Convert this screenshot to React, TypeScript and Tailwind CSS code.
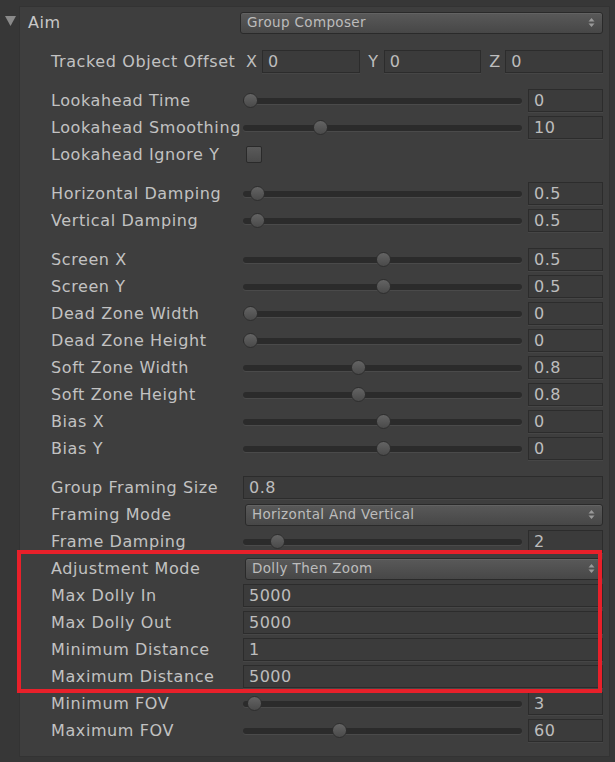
import React from "react";

type Row =
  | { kind: "vector"; label: string }
  | { kind: "slider"; label: string; pos: number; value: string }
  | { kind: "check"; label: string }
  | { kind: "field"; label: string; value: string }
  | { kind: "select"; label: string; value: string }
  | { kind: "gap" };

// pos = thumb position 0..1 along the track
const rows: Row[] = [
  { kind: "gap" },
  { kind: "vector", label: "Tracked Object Offset" },
  { kind: "gap" },
  { kind: "slider", label: "Lookahead Time", pos: 0, value: "0" },
  { kind: "slider", label: "Lookahead Smoothing", pos: 0.263, value: "10" },
  { kind: "check", label: "Lookahead Ignore Y" },
  { kind: "gap" },
  { kind: "slider", label: "Horizontal Damping", pos: 0.028, value: "0.5" },
  { kind: "slider", label: "Vertical Damping", pos: 0.028, value: "0.5" },
  { kind: "gap" },
  { kind: "slider", label: "Screen X", pos: 0.5, value: "0.5" },
  { kind: "slider", label: "Screen Y", pos: 0.5, value: "0.5" },
  { kind: "slider", label: "Dead Zone Width", pos: 0, value: "0" },
  { kind: "slider", label: "Dead Zone Height", pos: 0, value: "0" },
  { kind: "slider", label: "Soft Zone Width", pos: 0.406, value: "0.8" },
  { kind: "slider", label: "Soft Zone Height", pos: 0.406, value: "0.8" },
  { kind: "slider", label: "Bias X", pos: 0.5, value: "0" },
  { kind: "slider", label: "Bias Y", pos: 0.5, value: "0" },
  { kind: "gap" },
  { kind: "field", label: "Group Framing Size", value: "0.8" },
  { kind: "select", label: "Framing Mode", value: "Horizontal And Vertical" },
  { kind: "slider", label: "Frame Damping", pos: 0.103, value: "2" },
];

const boxed: Row[] = [
  { kind: "select", label: "Adjustment Mode", value: "Dolly Then Zoom" },
  { kind: "field", label: "Max Dolly In", value: "5000" },
  { kind: "field", label: "Max Dolly Out", value: "5000" },
  { kind: "field", label: "Minimum Distance", value: "1" },
  { kind: "field", label: "Maximum Distance", value: "5000" },
];

const tail: Row[] = [
  { kind: "slider", label: "Minimum FOV", pos: 0.015, value: "3" },
  { kind: "slider", label: "Maximum FOV", pos: 0.335, value: "60" },
];

const font = { fontFamily: '"DejaVu Sans", Verdana, sans-serif' };

function NumBox({ value, className = "" }: { value: string; className?: string }) {
  return (
    <div
      className={`h-[23px] bg-[#3b3b3b] border border-[#2c2c2c] shadow-[0_1px_0_#464646] flex items-center pl-[5px] text-[16px] tracking-[0.5px] text-[#bdbdbd] ${className}`}
    >
      {value}
    </div>
  );
}

function Dropdown({ value, className = "" }: { value: string; className?: string }) {
  return (
    <div
      className={`h-[22px] rounded-[3px] border border-[#2a2a2a] bg-gradient-to-b from-[#595959] to-[#474747] shadow-[inset_0_1px_0_#636363] flex items-center justify-between pl-[6px] pr-[7px] text-[13.5px] tracking-[0.35px] text-[#bcbcbc] ${className}`}
    >
      <span>{value}</span>
      <svg width="7" height="11" viewBox="0 0 7 11">
        <path d="M3.5 1 L6.5 4.5 H0.5 Z" fill="#9a9a9a" />
        <path d="M3.5 10 L6.5 6.5 H0.5 Z" fill="#9a9a9a" />
      </svg>
    </div>
  );
}

function Slider({ pos, value }: { pos: number; value: string }) {
  return (
    <div className="flex items-center flex-1">
      <div className="relative flex-1 h-[23px] flex items-center mr-[6px]">
        <div className="w-full h-[6px] rounded-full bg-[#2b2b2b] shadow-[0_1px_0_#4a4a4a]" />
        <div
          className="absolute top-[4px] w-[15px] h-[15px] rounded-full border border-[#2e2e2e] bg-gradient-to-b from-[#646464] to-[#4a4a4a]"
          style={{ left: `${pos * 266}px` }}
        />
      </div>
      <NumBox value={value} className="w-[75px]" />
    </div>
  );
}

function Control({ row }: { row: Row }) {
  switch (row.kind) {
    case "vector":
      return (
        <div className="flex items-center flex-1 gap-[7px] pl-[2px] text-[16px] text-[#bdbdbd]">
          {["X", "Y", "Z"].map((a) => (
            <div key={a} className="flex items-center flex-1 gap-[4px]">
              <span className="w-[13px] text-center">{a}</span>
              <NumBox value="0" className="flex-1" />
            </div>
          ))}
        </div>
      );
    case "slider":
      return <Slider pos={row.pos} value={row.value} />;
    case "check":
      return (
        <div className="ml-[3px] w-[16px] h-[17px] rounded-[2px] border border-[#2a2a2a] bg-gradient-to-b from-[#5a5a5a] to-[#4a4a4a]" />
      );
    case "field":
      return <NumBox value={row.value} className="flex-1" />;
    case "select":
      return <Dropdown value={row.value} className="flex-1 ml-[2px]" />;
    default:
      return null;
  }
}

function PropRow({ row }: { row: Row }) {
  if (row.kind === "gap") return <div className="h-[12px]" />;
  return (
    <div className="h-[27px] flex items-center pl-[31px] pr-[6px]">
      <div className="w-[192px] shrink-0 text-[16px] tracking-[0.6px] text-[#c2c2c2] whitespace-nowrap">
        {row.label}
      </div>
      <Control row={row} />
    </div>
  );
}

export default function App() {
  return (
    <div className="w-[615px] h-[762px] bg-[#373737] flex overflow-hidden" style={font}>
      <div className="w-[19px] shrink-0 pt-[16px] pl-[5px]">
        <svg width="11" height="10" viewBox="0 0 11 10">
          <path d="M0 0 H11 L5.5 10 Z" fill="#8a8a8a" />
        </svg>
      </div>
      <div className="mt-[6px] w-[591px] h-[751px] bg-[#3e3e3e] border border-[#333333] pt-[2px]">
        <div className="h-[27px] flex items-center pl-[8px] pr-[6px]">
          <div className="w-[212px] text-[16px] tracking-[0.6px] text-[#c8c8c8]">Aim</div>
          <Dropdown value="Group Composer" className="flex-1" />
        </div>
        {rows.map((r, i) => (
          <PropRow key={i} row={r} />
        ))}
        <div className="relative">
          <div className="absolute left-[-3px] top-[-5px] w-[585px] h-[143px] border-[4px] border-[#e8202a] pointer-events-none z-10" />
          {boxed.map((r, i) => (
            <PropRow key={i} row={r} />
          ))}
        </div>
        {tail.map((r, i) => (
          <PropRow key={i} row={r} />
        ))}
      </div>
    </div>
  );
}
